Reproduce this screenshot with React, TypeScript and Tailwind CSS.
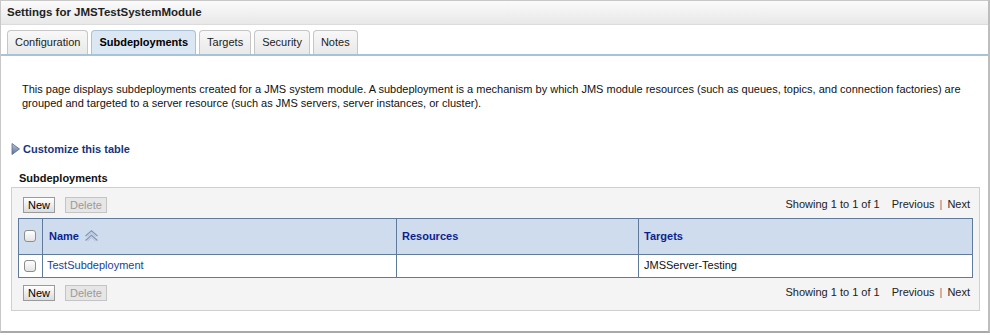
const TABS = [
  { label: "Configuration", active: false },
  { label: "Subdeployments", active: true },
  { label: "Targets", active: false },
  { label: "Security", active: false },
  { label: "Notes", active: false },
]

function Checkbox() {
  return (
    <span className="block w-[12px] h-[12px] rounded-[3px] border border-[#8d8d8d] bg-gradient-to-b from-white to-[#e4e4e4]" />
  )
}

function SortIcon() {
  return (
    <svg width="15" height="12" viewBox="0 0 15 12" className="ml-[5px]">
      <path d="M1.5 6 L7.5 0.8 L13.5 6" fill="none" stroke="#8494b4" strokeWidth="1.1" />
      <path d="M3.5 6.5 L7.5 3 L11.5 6.5" fill="none" stroke="#b3bfd6" strokeWidth="1" />
      <path d="M1.5 10.5 L7.5 5.3 L13.5 10.5" fill="none" stroke="#8494b4" strokeWidth="1.1" />
      <path d="M3.5 11 L7.5 7.5 L11.5 11" fill="none" stroke="#b3bfd6" strokeWidth="1" />
    </svg>
  )
}

function Toolbar() {
  return (
    <div className="flex items-center justify-between h-[16px]">
      <div className="flex items-center gap-[10px] pl-[5px]">
        <button className="h-[16px] px-[4px] border border-[#9a9a9a] bg-gradient-to-b from-white to-[#dcdcdc] text-[11px] leading-[14px] text-black">
          New
        </button>
        <button className="h-[16px] px-[4px] border border-[#c4c4c4] bg-[#e6e6e6] text-[11px] leading-[14px] text-[#9a9a9a]">
          Delete
        </button>
      </div>
      <div className="text-[11px] text-[#222] pr-[3px] flex items-center">
        <span>Showing 1 to 1 of 1</span>
        <span className="ml-[12px]">Previous</span>
        <span className="mx-[5px] text-[#777]">|</span>
        <span>Next</span>
      </div>
    </div>
  )
}

export default function App() {
  return (
    <div className="w-[990px] h-[335px] bg-white font-['Liberation_Sans',Arial,sans-serif] text-black">
      <div className="h-[333px] border border-[#c8c8c8] border-b-[2px] border-b-[#a9a9a9] border-r-[2px] border-r-[#bdbdbd] flex flex-col">
        {/* Title */}
        <div className="h-[24px] border-b border-[#dcdcdc] bg-gradient-to-b from-[#fbfbfb] to-[#e8e8e8] flex items-center pl-[6px]">
          <span className="text-[11.5px] font-bold text-[#222]">Settings for JMSTestSystemModule</span>
        </div>

        {/* Tabs */}
        <div className="mt-[5px] flex items-end pl-[6px] gap-[3px] border-b-2 border-[#a7c3d8] h-[26px]">
          {TABS.map((t) => (
            <div
              key={t.label}
              className={`h-[24px] px-[7px] flex items-center rounded-t-[4px] border border-b-0 text-[11px] ${
                t.active
                  ? "bg-[#dbe7f2] border-[#a9c2d8] font-bold text-black"
                  : "bg-gradient-to-b from-[#f8f8f8] to-[#e9e9e9] border-[#c6c6c6] text-[#222]"
              }`}
            >
              {t.label}
            </div>
          ))}
        </div>

        {/* Description */}
        <div className="pl-[21px] mt-[26px] text-[11px] leading-[14px] text-[#111] whitespace-nowrap">
          This page displays subdeployments created for a JMS system module. A subdeployment is a mechanism by which JMS module resources (such as queues, topics, and connection factories) are
          <br />
          grouped and targeted to a server resource (such as JMS servers, server instances, or cluster).
        </div>

        {/* Customize */}
        <div className="mt-[32px] pl-[10px] flex items-center h-[14px]">
          <svg width="9" height="12" viewBox="0 0 9 12" className="mr-[3px]">
            <defs>
              <linearGradient id="tri" x1="0" y1="0" x2="0" y2="1">
                <stop offset="0" stopColor="#b9c6dc" />
                <stop offset="1" stopColor="#5d6f95" />
              </linearGradient>
            </defs>
            <path d="M1 0.5 L8.5 6 L1 11.5 Z" fill="url(#tri)" stroke="#55688f" strokeWidth="0.8" />
          </svg>
          <span className="text-[11px] font-bold text-[#17347e]">Customize this table</span>
        </div>

        {/* Section title */}
        <div className="mt-[14px] pl-[18px] text-[11px] font-bold text-[#111]">Subdeployments</div>

        {/* Panel */}
        <div className="ml-[10px] w-[969px] h-[124px] border border-[#cfcfcf] bg-[#f4f4f4] px-[6px] pt-[9px]">
          <Toolbar />

          <table className="mt-[5px] w-full border-collapse text-[11px]">
            <thead>
              <tr className="h-[36px] bg-[#cfdcee]">
                <th className="w-[24px] border border-[#5f7a9b] px-[5px]">
                  <Checkbox />
                </th>
                <th className="w-[354px] border border-[#5f7a9b] px-[6px] text-left">
                  <span className="flex items-center font-bold text-[#0e1f8e]">
                    Name
                    <SortIcon />
                  </span>
                </th>
                <th className="w-[242px] border border-[#5f7a9b] px-[5px] text-left font-bold text-[#0e1f8e]">
                  Resources
                </th>
                <th className="border border-[#5f7a9b] px-[5px] text-left font-bold text-[#0e1f8e]">
                  Targets
                </th>
              </tr>
            </thead>
            <tbody>
              <tr className="h-[23px] bg-white">
                <td className="border border-[#5f7a9b] px-[5px]">
                  <Checkbox />
                </td>
                <td className="border border-[#5f7a9b] px-[4px] text-[#1d3e96]">TestSubdeployment</td>
                <td className="border border-[#5f7a9b] px-[5px]"></td>
                <td className="border border-[#5f7a9b] px-[5px] text-[#111]">JMSServer-Testing</td>
              </tr>
            </tbody>
          </table>

          <div className="mt-[7px]">
            <Toolbar />
          </div>
        </div>
      </div>
    </div>
  )
}
